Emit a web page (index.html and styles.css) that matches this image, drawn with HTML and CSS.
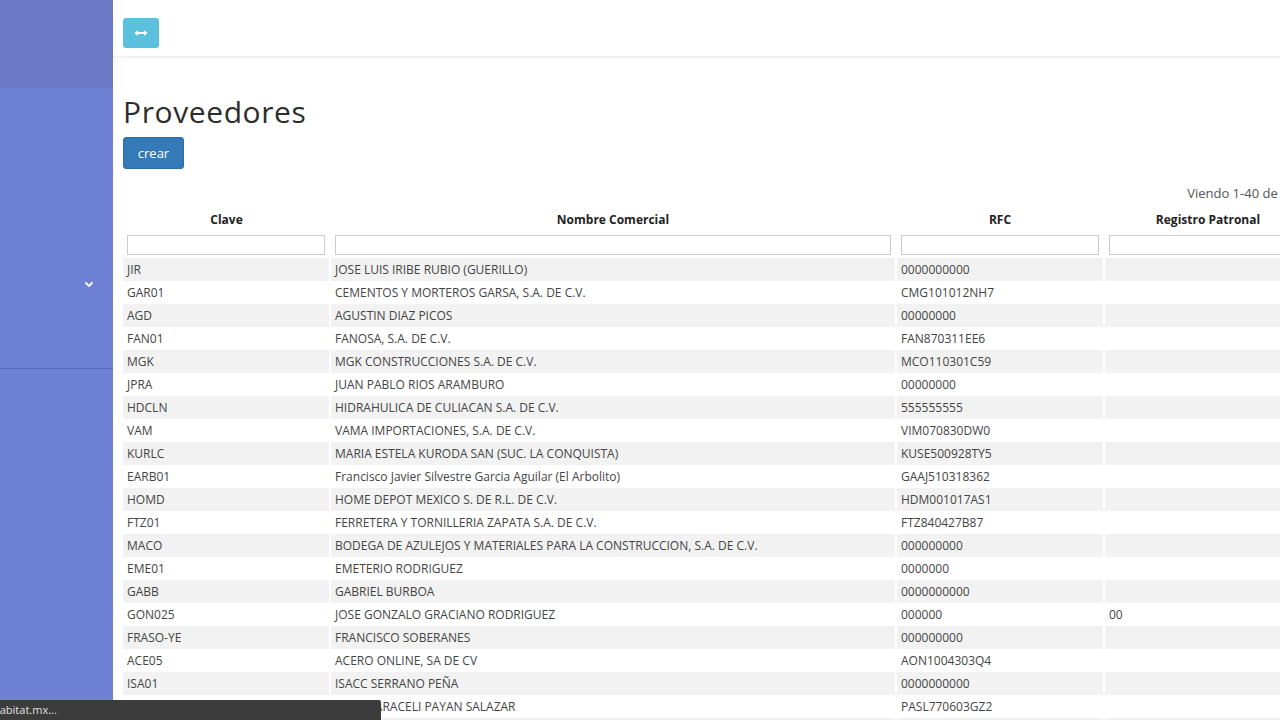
FILE: index.html
```html
<!DOCTYPE html>
<html lang="es">
<head>
  <meta charset="UTF-8">
  <title>Proveedores</title>
  <link rel="stylesheet" href="styles.css">
</head>
<body>
  <div class="wrapper">
    <aside class="sidebar">
      <div class="brand"></div>
      <div class="user-panel">
        <div class="menu-toggle">
          <svg width="10" height="7" viewBox="0 0 10 7"><path d="M1.5 1.5 L5 5 L8.5 1.5" fill="none" stroke="#fff" stroke-width="1.8"/></svg>
        </div>
      </div>
      <div class="menu"></div>
    </aside>

    <div class="main">
      <div class="topbar">
        <button class="btn btn-info" type="button">
          <svg width="14" height="8" viewBox="0 0 14 8"><path d="M3 4 H11" stroke="#fff" stroke-width="2"/><path d="M0.5 4 L4 1 V7 Z M13.5 4 L10 1 V7 Z" fill="#fff"/></svg>
        </button>
      </div>

      <div class="content">
        <h1>Proveedores</h1>
        <a class="btn btn-primary" href="#">crear</a>

        <div class="grid-view">
          <div class="summary">Viendo 1-40 de 312 elementos.</div>
          <table class="table">
            <colgroup>
              <col class="c-clave">
              <col class="c-nombre">
              <col class="c-rfc">
              <col class="c-reg">
              <col class="c-act">
            </colgroup>
            <thead>
              <tr>
                <th>Clave</th>
                <th>Nombre Comercial</th>
                <th>RFC</th>
                <th>Registro Patronal</th>
                <th>Acciones</th>
              </tr>
              <tr class="filters">
                <td><input type="text"></td>
                <td><input type="text"></td>
                <td><input type="text"></td>
                <td><input type="text"></td>
                <td></td>
              </tr>
            </thead>
            <tbody>
              <tr><td>JIR</td><td>JOSE LUIS IRIBE RUBIO (GUERILLO)</td><td>0000000000</td><td></td><td></td></tr>
              <tr><td>GAR01</td><td>CEMENTOS Y MORTEROS GARSA, S.A. DE C.V.</td><td>CMG101012NH7</td><td></td><td></td></tr>
              <tr><td>AGD</td><td>AGUSTIN DIAZ PICOS</td><td>00000000</td><td></td><td></td></tr>
              <tr><td>FAN01</td><td>FANOSA, S.A. DE C.V.</td><td>FAN870311EE6</td><td></td><td></td></tr>
              <tr><td>MGK</td><td>MGK CONSTRUCCIONES S.A. DE C.V.</td><td>MCO110301C59</td><td></td><td></td></tr>
              <tr><td>JPRA</td><td>JUAN PABLO RIOS ARAMBURO</td><td>00000000</td><td></td><td></td></tr>
              <tr><td>HDCLN</td><td>HIDRAHULICA DE CULIACAN S.A. DE C.V.</td><td>555555555</td><td></td><td></td></tr>
              <tr><td>VAM</td><td>VAMA IMPORTACIONES, S.A. DE C.V.</td><td>VIM070830DW0</td><td></td><td></td></tr>
              <tr><td>KURLC</td><td>MARIA ESTELA KURODA SAN (SUC. LA CONQUISTA)</td><td>KUSE500928TY5</td><td></td><td></td></tr>
              <tr><td>EARB01</td><td>Francisco Javier Silvestre Garcia Aguilar (El Arbolito)</td><td>GAAJ510318362</td><td></td><td></td></tr>
              <tr><td>HOMD</td><td>HOME DEPOT MEXICO S. DE R.L. DE C.V.</td><td>HDM001017AS1</td><td></td><td></td></tr>
              <tr><td>FTZ01</td><td>FERRETERA Y TORNILLERIA ZAPATA S.A. DE C.V.</td><td>FTZ840427B87</td><td></td><td></td></tr>
              <tr><td>MACO</td><td>BODEGA DE AZULEJOS Y MATERIALES PARA LA CONSTRUCCION, S.A. DE C.V.</td><td>000000000</td><td></td><td></td></tr>
              <tr><td>EME01</td><td>EMETERIO RODRIGUEZ</td><td>0000000</td><td></td><td></td></tr>
              <tr><td>GABB</td><td>GABRIEL BURBOA</td><td>0000000000</td><td></td><td></td></tr>
              <tr><td>GON025</td><td>JOSE GONZALO GRACIANO RODRIGUEZ</td><td>000000</td><td>00</td><td></td></tr>
              <tr><td>FRASO-YE</td><td>FRANCISCO SOBERANES</td><td>000000000</td><td></td><td></td></tr>
              <tr><td>ACE05</td><td>ACERO ONLINE, SA DE CV</td><td>AON1004303Q4</td><td></td><td></td></tr>
              <tr><td>ISA01</td><td>ISACC SERRANO PEÑA</td><td>0000000000</td><td></td><td></td></tr>
              <tr><td>PAS01</td><td>MARIA ARACELI PAYAN SALAZAR</td><td>PASL770603GZ2</td><td></td><td></td></tr>
              <tr><td>COM02</td><td>COMERCIAL DEL PACIFICO S.A. DE C.V.</td><td>000000000</td><td></td><td></td></tr>
            </tbody>
          </table>
        </div>
      </div>
    </div>
  </div>

  <div class="status-bar">habitat.mx...</div>
</body>
</html>
```

FILE: styles.css
```css
/* Layout general */
html, body {
  margin: 0;
  height: 100%;
  overflow: hidden;
}

body {
  font-family: "Open Sans", "Liberation Sans", sans-serif;
  color: #333;
  background: #fff;
}

.wrapper {
  display: flex;
  height: 720px;
}

/* Barra lateral */
.sidebar {
  width: 113px;
  flex-shrink: 0;
  background: #6e80d3;
}

.brand {
  height: 88px;
  background: #6b79c6;
}

.user-panel {
  height: 280px;
  border-bottom: 1px solid #5b6bb8;
  position: relative;
}

.menu-toggle {
  position: absolute;
  left: 84px;
  top: 183px;
}

/* Contenido */
.main {
  flex: 1;
  min-width: 0;
}

.topbar {
  height: 58px;
  border-bottom: 2px solid #f1f1f1;
  padding: 18px 0 0 10px;
  box-sizing: border-box;
}

.btn {
  display: inline-flex;
  align-items: center;
  justify-content: center;
  border: none;
  border-radius: 3px;
  color: #fff;
  text-decoration: none;
  cursor: pointer;
}

.btn-info {
  width: 36px;
  height: 30px;
  background: #5bc0de;
}

.btn-primary {
  width: 61px;
  height: 32px;
  background: #337ab7;
  border: 1px solid #2e6da4;
  box-sizing: border-box;
  font-size: 13px;
  padding-bottom: 1px;
}

.content {
  padding: 0 0 0 10px;
}

.content h1 {
  margin: 37px 0 8px;
  font-size: 30px;
  font-weight: 400;
  line-height: 34px;
  color: #2d2d2d;
  letter-spacing: 0.6px;
}

/* Tabla */
.grid-view {
  width: 1259px;
  margin-top: 15px;
}

.summary {
  text-align: right;
  font-size: 13px;
  color: #555;
  height: 19px;
  line-height: 18px;
  padding-right: 8px;
}

.table {
  table-layout: fixed;
  width: 1450px;
  border-collapse: collapse;
  font-size: 12px;
}

.c-clave { width: 207px; }
.c-nombre { width: 566px; }
.c-rfc { width: 208px; }
.c-reg { width: 208px; }

.table th {
  font-weight: 700;
  color: #222;
  height: 25px;
  padding: 4px 0 0;
  line-height: 16px;
  font-size: 12px;
  vertical-align: middle;
}

.table td {
  padding: 0 4px;
  height: 23px;
  line-height: 23px;
  white-space: nowrap;
  overflow: hidden;
  color: #444;
  border-right: 2px solid #fff;
}

.table tbody tr:nth-child(odd) td {
  background: #f2f2f2;
}

.filters td {
  height: 26px;
  line-height: normal;
}

.filters input {
  width: 100%;
  box-sizing: border-box;
  height: 20px;
  border: 1px solid #ccc;
  margin: 0;
  display: block;
}

/* Barra de estado del navegador */
.status-bar {
  position: fixed;
  left: 0;
  bottom: 0;
  width: 381px;
  height: 20px;
  line-height: 20px;
  background: #3c3c3c;
  color: #e0e0e0;
  font-size: 11px;
  text-indent: -7px;
  overflow: hidden;
  border-top-right-radius: 2px;
}
```
